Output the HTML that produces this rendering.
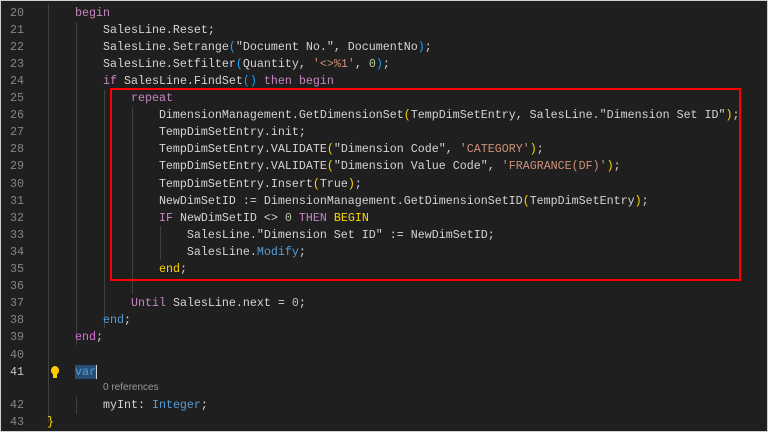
<!DOCTYPE html><html><head><style>
body{margin:0;width:768px;height:432px;overflow:hidden;background:#1f1f1f;font-family:"Liberation Mono",monospace;font-size:11.66px;}
.f{position:absolute;left:0;top:0;width:766px;height:430px;border:1px solid #d0d0d0;background:#1f1f1f}
.l{position:absolute;left:0;height:17px;line-height:17px;white-space:pre;color:#d4d4d4;width:768px}
.n{position:absolute;left:0;width:24px;text-align:right;color:#858585}
.c{position:absolute;left:75px}
.k{color:#c586c0}.b{color:#569cd6}.s{color:#ce9178}.y{color:#ffd700}.p{color:#da70d6}.q{color:#179fff}.m{color:#b5cea8}.t{color:#4ec9b0}.d{color:#9cdcfe}
.g{position:absolute;width:1px;background:#404040}
</style></head><body><div class="f"></div>
<div class="g" style="left:48px;top:4px;height:418px"></div>
<div class="g" style="left:76px;top:22px;height:323px"></div>
<div class="g" style="left:104px;top:90px;height:238px"></div>
<div class="g" style="left:132px;top:107px;height:187px"></div>
<div class="g" style="left:160px;top:226px;height:34px"></div>
<div class="g" style="left:76px;top:397px;height:17px"></div>
<div class="l" style="top:4.5px"><span class="n">20</span><span class="c"><span class="k">begin</span></span></div>
<div class="l" style="top:21.6px"><span class="n">21</span><span class="c">    SalesLine.Reset;</span></div>
<div class="l" style="top:38.7px"><span class="n">22</span><span class="c">    SalesLine.Setrange<span class="q">(</span>"Document No.", DocumentNo<span class="q">)</span>;</span></div>
<div class="l" style="top:55.8px"><span class="n">23</span><span class="c">    SalesLine.Setfilter<span class="q">(</span>Quantity, <span class="s">'&lt;&gt;%1'</span>, <span class="m">0</span><span class="q">)</span>;</span></div>
<div class="l" style="top:72.9px"><span class="n">24</span><span class="c">    <span class="k">if</span> SalesLine.FindSet<span class="q">()</span> <span class="k">then begin</span></span></div>
<div class="l" style="top:90px"><span class="n">25</span><span class="c">        <span class="k">repeat</span></span></div>
<div class="l" style="top:107.1px"><span class="n">26</span><span class="c">            DimensionManagement.GetDimensionSet<span class="y">(</span>TempDimSetEntry, SalesLine."Dimension Set ID"<span class="y">)</span>;</span></div>
<div class="l" style="top:124.2px"><span class="n">27</span><span class="c">            TempDimSetEntry.init;</span></div>
<div class="l" style="top:141.3px"><span class="n">28</span><span class="c">            TempDimSetEntry.VALIDATE<span class="y">(</span>"Dimension Code", <span class="s">'CATEGORY'</span><span class="y">)</span>;</span></div>
<div class="l" style="top:158.4px"><span class="n">29</span><span class="c">            TempDimSetEntry.VALIDATE<span class="y">(</span>"Dimension Value Code", <span class="s">'FRAGRANCE(DF)'</span><span class="y">)</span>;</span></div>
<div class="l" style="top:175.5px"><span class="n">30</span><span class="c">            TempDimSetEntry.Insert<span class="y">(</span>True<span class="y">)</span>;</span></div>
<div class="l" style="top:192.6px"><span class="n">31</span><span class="c">            NewDimSetID := DimensionManagement.GetDimensionSetID<span class="y">(</span>TempDimSetEntry<span class="y">)</span>;</span></div>
<div class="l" style="top:209.7px"><span class="n">32</span><span class="c">            <span class="k">IF</span> NewDimSetID &lt;&gt; <span class="m">0</span> <span class="k">THEN</span> <span class="y">BEGIN</span></span></div>
<div class="l" style="top:226.8px"><span class="n">33</span><span class="c">                SalesLine."Dimension Set ID" := NewDimSetID;</span></div>
<div class="l" style="top:243.9px"><span class="n">34</span><span class="c">                SalesLine.<span class="b">Modify</span>;</span></div>
<div class="l" style="top:261px"><span class="n">35</span><span class="c">            <span class="y">end</span>;</span></div>
<div class="l" style="top:278.1px"><span class="n">36</span></div>
<div class="l" style="top:295.2px"><span class="n">37</span><span class="c">        <span class="k">Until</span> SalesLine.next = <span class="m">0</span>;</span></div>
<div class="l" style="top:312.3px"><span class="n">38</span><span class="c">    <span class="b">end</span>;</span></div>
<div class="l" style="top:329.4px"><span class="n">39</span><span class="c"><span class="p">end</span>;</span></div>
<div class="l" style="top:346.5px"><span class="n">40</span></div>
<div class="l" style="top:364px"><span class="n" style="color:#c6c6c6">41</span><span class="c"><span class="b" style="background:#264f78">var</span><span style="border-left:1px solid #d4d4d4"></span></span></div>
<div style="position:absolute;left:51px;top:366px;width:8px;height:9px;border-radius:50%;background:#ffcc00"></div>
<div style="position:absolute;left:53px;top:374px;width:4px;height:4px;background:#ffcc00"></div>
<div style="position:absolute;left:103px;top:382px;font-family:'Liberation Sans',sans-serif;font-size:10px;color:#999">0 references</div>
<div class="l" style="top:396.5px"><span class="n">42</span><span class="c">    myInt: <span class="b">Integer</span>;</span></div>
<div class="l" style="top:413.5px"><span class="n">43</span><span class="c" style="left:47px"><span class="y">}</span></span></div>
<div style="position:absolute;left:110px;top:88px;width:627px;height:189px;border:2px solid #f00"></div>
</body></html>
